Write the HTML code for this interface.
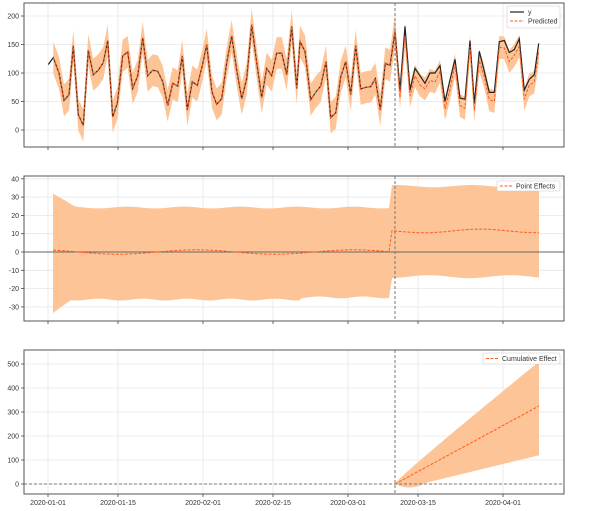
<!DOCTYPE html>
<html><head><meta charset="utf-8">
<style>
html,body{margin:0;padding:0;background:#fff;}
svg{display:block;}
text{font-family:"Liberation Sans",sans-serif;font-size:7px;fill:#333;}
</style></head>
<body>
<svg id="s" width="600" height="511" viewBox="0 0 600 511" xmlns="http://www.w3.org/2000/svg"></svg>
<script>
var S=document.getElementById('s');var h='';
var L=24,R=564,VX=395;
var xt=[48,118,203,273,348,418,503];
var xl=['2020-01-01','2020-01-15','2020-02-01','2020-02-15','2020-03-01','2020-03-15','2020-04-01'];
function panel(top,bot,ticks,y0,k){
  h+='<rect x="'+L+'" y="'+top+'" width="'+(R-L)+'" height="'+(bot-top)+'" fill="#fff"/>';
  xt.forEach(function(x){h+='<line x1="'+x+'" y1="'+top+'" x2="'+x+'" y2="'+bot+'" stroke="#e6e6e6" stroke-width="0.8"/>';h+='<line x1="'+x+'" y1="'+bot+'" x2="'+x+'" y2="'+(bot+3)+'" stroke="#444" stroke-width="0.8"/>';});
  ticks.forEach(function(v){var y=y0-v*k;h+='<line x1="'+L+'" y1="'+y+'" x2="'+R+'" y2="'+y+'" stroke="#e6e6e6" stroke-width="0.8"/>';h+='<line x1="'+(L-3)+'" y1="'+y+'" x2="'+L+'" y2="'+y+'" stroke="#444" stroke-width="0.8"/>';h+='<text x="'+(L-5)+'" y="'+(y+2.5)+'" text-anchor="end">'+v+'</text>';});
}
function frame(top,bot){h+='<rect x="'+L+'" y="'+top+'" width="'+(R-L)+'" height="'+(bot-top)+'" fill="none" stroke="#555" stroke-width="1"/>';
 h+='<line x1="'+VX+'" y1="'+top+'" x2="'+VX+'" y2="'+bot+'" stroke="#777" stroke-width="1" stroke-dasharray="3,2"/>';}
function pts(a){return a.map(function(p){return p[0].toFixed(1)+','+p[1].toFixed(1)}).join(' ');}
var z1=[[145,115],[160,127],[177,100],[192,52],[207,62],[220,148],[235,27],[250,8],[265,140],[280,97],[295,105],[310,118],[323,157],[338,23],[352,47],[368,130],[383,137],[398,73],[413,95],[428,162],[443,95],[458,105],[473,103],[488,85],[503,43],[518,82],[533,77],[547,130],[562,35],[577,85],[592,78],[607,113],[620,150],[636,67],[650,45],[665,55],[680,118],[695,165],[710,105],[725,55],[740,90],[755,185],[770,118],[785,57],[800,108],[815,95],[830,135],[845,135],[860,97],[875,182],[890,73]];
var z2=[[0,155],[15,138],[32,53],[48,67],[62,77],[78,120],[92,22],[107,30],[122,93],[137,120],[152,62],[167,148],[182,72],[197,75],[212,76],[226,90],[241,35],[256,117],[270,113],[285,173],[300,70],[315,182],[330,70],[345,108],[360,95],[375,82],[390,100],[405,100],[420,113],[435,50],[450,88],[465,124],[480,56],[495,54],[510,157],[523,47],[538,138],[553,103],[568,66],[583,66],[598,155],[613,157],[628,136],[643,141],[658,160],[673,70],[688,89],[703,97],[716,152]];
var Y=[];z1.forEach(function(p){Y.push([p[0]/3,p[1]]);});z2.forEach(function(p){Y.push([300+p[0]/3,p[1]]);});
function y1(v){return 130-v*0.57;}
panel(3,147,[0,50,100,150,200],130,0.57);
var P=Y.slice(1).map(function(p,i){var off=p[0]>VX?(10+ (i%3)*3):0;return [p[0],p[1]-off];});
var up=P.map(function(p){return [p[0],y1(p[1]+(p[0]>VX?20:28))];});
var lo=P.map(function(p){return [p[0],y1(p[1]-(p[0]>VX?20:28))];}).reverse();
h+='<polygon points="'+pts(up.concat(lo))+'" fill="#fdc597"/>';
h+='<polyline points="'+pts(Y.map(function(p){return [p[0],y1(p[1])]}))+'" fill="none" stroke="#222" stroke-width="1.2"/>';
h+='<polyline points="'+pts(P.map(function(p){return [p[0],y1(p[1])]}))+'" fill="none" stroke="#ff5a1f" stroke-width="1" stroke-dasharray="3,1.5"/>';
frame(3,147);
h+='<rect x="507" y="6" width="53" height="22" fill="#fff" stroke="#ccc" stroke-width="0.6" rx="1.5"/>';
h+='<line x1="510" y1="12" x2="524" y2="12" stroke="#222" stroke-width="1.2"/><text x="528" y="14.5">y</text>';
h+='<line x1="510" y1="21" x2="524" y2="21" stroke="#ff5a1f" stroke-width="1" stroke-dasharray="3,1.5"/><text x="528" y="23.5">Predicted</text>';
panel(176,321,[-30,-20,-10,0,10,20,30,40],252,1.83);
function y2(v){return 252-v*1.83;}
var u2=[],l2=[],m2=[];
for(var x=53;x<=539;x+=3){var u,l,m;
 if(x<VX-3){u=(x<75?32-(x-53)*0.35:24.3)+Math.sin(x/9)*0.5;l=(x<70?-34+(x-53)*0.45:-26)+Math.sin(x/7)*0.5+(x>300?1.2:0);m=Math.sin(x/25)*1.2;}
 else {u=36+Math.sin(x/12)*0.6;l=-13.5+Math.sin(x/13)*0.8;m=11.5+Math.sin(x/18)*1;}
 u2.push([x,y2(u)]);l2.push([x,y2(l)]);m2.push([x,y2(m)]);}
h+='<polygon points="'+pts(u2.concat(l2.slice().reverse()))+'" fill="#fdc597"/>';
h+='<line x1="'+L+'" y1="252" x2="'+R+'" y2="252" stroke="#666" stroke-width="1"/>';
h+='<polyline points="'+pts(m2)+'" fill="none" stroke="#ff5a1f" stroke-width="1" stroke-dasharray="3,1.5"/>';
frame(176,321);
h+='<rect x="497" y="181" width="63" height="10" fill="#fff" stroke="#ccc" stroke-width="0.6" rx="1.5"/>';
h+='<line x1="500" y1="186" x2="513" y2="186" stroke="#ff5a1f" stroke-width="1" stroke-dasharray="3,1.5"/><text x="516" y="188.5">Point Effects</text>';
panel(350,494,[0,100,200,300,400,500],484,0.24);
function y3(v){return 484-v*0.24;}
var u3=[],l3=[],m3=[];
for(var x=VX;x<=539;x+=3){var t=(x-VX)/(539-VX);
 u3.push([x,Math.max(351,y3(t*470+Math.sqrt(t)*40))]);l3.push([x,y3(t<0.2?-15*Math.sin(t*15.7):(t-0.18)*146)]);m3.push([x,y3(t*325)]);}
h+='<polygon points="'+pts(u3.concat(l3.slice().reverse()))+'" fill="#fdc597"/>';
h+='<line x1="'+L+'" y1="484" x2="'+R+'" y2="484" stroke="#777" stroke-width="1" stroke-dasharray="3,2"/>';
h+='<polyline points="'+pts(m3)+'" fill="none" stroke="#ff5a1f" stroke-width="1" stroke-dasharray="3,1.5"/>';
frame(350,494);
h+='<rect x="483" y="353" width="77" height="11" fill="#fff" stroke="#ccc" stroke-width="0.6" rx="1.5"/>';
h+='<line x1="486" y1="358.5" x2="499" y2="358.5" stroke="#ff5a1f" stroke-width="1" stroke-dasharray="3,1.5"/><text x="502" y="361">Cumulative Effect</text>';
xt.forEach(function(x,i){h+='<text x="'+x+'" y="505" text-anchor="middle">'+xl[i]+'</text>';});
S.innerHTML=h;
</script>
</body></html>
